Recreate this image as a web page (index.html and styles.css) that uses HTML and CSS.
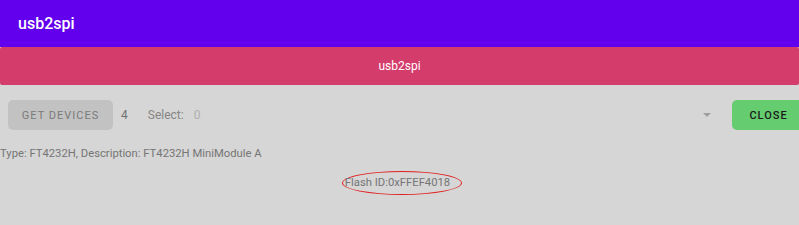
FILE: index.html
```html
<!DOCTYPE html>
<html lang="en">
<head>
    <meta charset="UTF-8">
    <title>usb2spi</title>
    <link rel="stylesheet" href="styles.css">
</head>
<body>
    <div class="appbar">usb2spi</div>
    <div class="banner">usb2spi</div>
    <div class="toolbar">
        <button class="btn-get" disabled>GET DEVICES</button>
        <span class="count">4</span>
        <span class="label">Select:</span>
        <div class="select">
            <span class="value">0</span>
            <span class="arrow"></span>
        </div>
        <button class="btn-close">CLOSE</button>
    </div>
    <div class="info">Type: FT4232H, Description: FT4232H MiniModule A</div>
    <div class="flash"><span class="mark">Flash ID:0xFFEF4018</span></div>
</body>
</html>
```

FILE: styles.css
```css
*{
    margin: 0;
    padding: 0;
    box-sizing: border-box;
}

body{
    width: 799px;
    height: 225px;
    overflow: hidden;
    background: #d6d6d6;
    font-family: Roboto, "Liberation Sans", sans-serif;
    color: #757575;
}

.appbar{
    height: 47px;
    background: #6200ee;
    color: #fff;
    font-size: 16px;
    font-weight: 500;
    line-height: 47px;
    padding-left: 18px;
}

.banner{
    height: 38px;
    background: #d33c6b;
    border-radius: 2px;
    color: #fff;
    font-size: 12px;
    line-height: 38px;
    text-align: center;
}

.toolbar{
    display: flex;
    align-items: center;
    height: 30px;
    margin-top: 15px;
    padding-left: 8px;
    margin-right: -6px;
    font-size: 12px;
}

.toolbar button{
    font-family: Roboto, "Liberation Sans", sans-serif;
    font-size: 11px;
    letter-spacing: 1px;
    border: none;
    border-radius: 5px;
    height: 30px;
}

.btn-get{
    width: 105px;
    background: #c2c2c2;
    color: #7a7a7a;
    font-weight: 400;
}

.count{
    margin-left: 8px;
    color: #707070;
}

.label{
    margin-left: 20px;
    color: #858585;
}

.select{
    flex: 1;
    display: flex;
    align-items: center;
    justify-content: space-between;
    margin-left: 10px;
    padding-right: 21px;
}

.select .value{
    color: #b0b0b0;
}

.select .arrow{
    width: 0;
    height: 0;
    border-left: 4px solid transparent;
    border-right: 4px solid transparent;
    border-top: 4px solid #9e9e9e;
}

.btn-close{
    width: 73px;
    background: #66cc70;
    color: #1a1a1a;
    font-weight: 500;
    letter-spacing: 0.5px;
}

.info{
    font-size: 11.25px;
    margin-top: 17px;
    line-height: 14px;
}

.flash{
    text-align: center;
    margin-top: 10px;
    font-size: 11.25px;
}

.mark{
    display: inline-block;
    border: 1px solid #e02020;
    border-radius: 50%;
    padding: 4px 11px 4px 2px;
    line-height: 14px;
    margin-left: 5px;
}
```
